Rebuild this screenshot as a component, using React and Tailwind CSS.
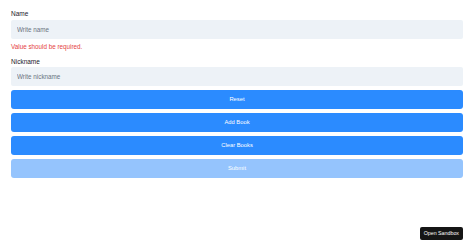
export default function App() {
  return (
    <div className="relative h-[248px] w-full bg-white font-['Liberation_Sans',Arial,sans-serif]">
      <form className="flex flex-col px-[11px] pt-[10px]" onSubmit={(e) => e.preventDefault()}>
        <label className="text-[6.5px] leading-[8px] text-[#1a202c]">Name</label>
        <input
          placeholder="Write name"
          className="mt-[2px] h-[19px] w-full rounded-[2px] bg-[#edf2f7] px-[6px] text-[6.3px] text-[#1a202c] outline-none placeholder:text-[#6b7280]"
        />
        <p className="mt-[4px] text-[6.3px] leading-[8px] text-[#e53e3e]">Value should be required.</p>
        <label className="mt-[7px] text-[6.5px] leading-[8px] text-[#1a202c]">Nickname</label>
        <input
          placeholder="Write nickname"
          className="mt-[1px] h-[19px] w-full rounded-[2px] bg-[#edf2f7] px-[6px] text-[6.3px] text-[#1a202c] outline-none placeholder:text-[#6b7280]"
        />
        <div className="mt-[4px] flex flex-col gap-[4px]">
          <button type="button" className="h-[19px] w-full rounded-[3px] bg-[#2b8bff] text-[5.8px] text-white">
            Reset
          </button>
          <button type="button" className="h-[19px] w-full rounded-[3px] bg-[#2b8bff] text-[5.8px] text-white">
            Add Book
          </button>
          <button type="button" className="h-[19px] w-full rounded-[3px] bg-[#2b8bff] text-[5.8px] text-white">
            Clear Books
          </button>
          <button type="submit" disabled className="h-[19px] w-full rounded-[3px] bg-[#95c4fd] text-[5.8px] text-white">
            Submit
          </button>
        </div>
      </form>
      <button
        type="button"
        className="absolute right-[11px] top-[227px] h-[13px] rounded-[2px] bg-[#151515] px-[4px] text-[5.3px] text-white"
      >
        Open Sandbox
      </button>
    </div>
  )
}
